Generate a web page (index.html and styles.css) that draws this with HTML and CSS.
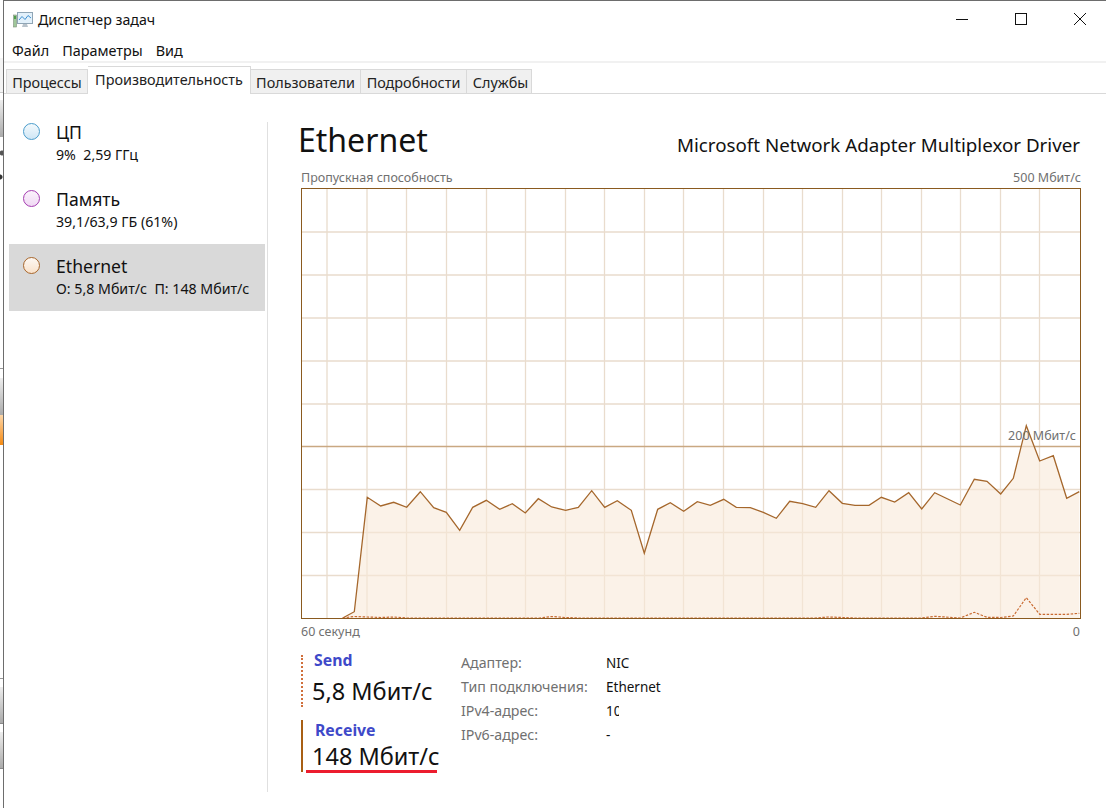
FILE: index.html
```html
<!DOCTYPE html>
<html lang="ru">
<head>
    <meta charset="UTF-8">
    <meta name="viewport" content="width=device-width, initial-scale=1.0">
    <title>Диспетчер задач</title>
    <link rel="stylesheet" href="styles.css">
</head>
<body>
    <div class="backdrop">
        <div class="strip strip-light"></div>
        <div class="strip strip-gray strip-first"></div>
        <div class="strip strip-gap"></div>
        <div class="strip strip-gray strip-tall"></div>
        <div class="strip strip-orange"></div>
        <div class="strip strip-gap2"></div>
        <div class="strip strip-gray strip-low"></div>
        <div class="strip strip-gray strip-low"></div>
    </div>

    <div class="window">
        <div class="titlebar">
            <svg class="app-icon" width="20" height="18" viewBox="0 0 20 18">
                <rect x="0.5" y="4" width="3" height="12" fill="#9fc79a" stroke="#7d8f7a" stroke-width="0.6"/>
                <rect x="1" y="5" width="2" height="3" fill="#4f9e4c"/>
                <rect x="4.5" y="1.5" width="15" height="11" fill="#e3f1fb" stroke="#8fa5b5"/>
                <path d="M6 9 L9 5.5 L12 8.5 L15 4.5 L18 7" fill="none" stroke="#3d8fd0" stroke-width="1"/>
                <path d="M10 13 H14 L15 16 H9 Z" fill="#b9c3cb"/>
            </svg>
            <span class="title-text">Диспетчер задач</span>
            <div class="win-buttons">
                <svg width="14" height="14" viewBox="0 0 14 14"><path d="M1 7.5 H13" stroke="#111" fill="none"/></svg>
                <svg width="14" height="14" viewBox="0 0 14 14"><rect x="1.5" y="1.5" width="11" height="11" stroke="#111" fill="none"/></svg>
                <svg width="14" height="14" viewBox="0 0 14 14"><path d="M1 1 L13 13 M13 1 L1 13" stroke="#111" fill="none"/></svg>
            </div>
        </div>

        <div class="menubar">
            <span>Файл</span>
            <span>Параметры</span>
            <span>Вид</span>
        </div>

        <div class="tabs">
            <div class="tab tab-first">Процессы</div>
            <div class="tab tab-active">Производительность</div>
            <div class="tab tab-users">Пользователи</div>
            <div class="tab tab-details">Подробности</div>
            <div class="tab tab-services">Службы</div>
        </div>

        <div class="content">
            <div class="sidebar">
                <div class="item">
                    <span class="dot dot-cpu"></span>
                    <div>
                        <div class="item-name">ЦП</div>
                        <div class="item-sub">9%&nbsp; 2,59 ГГц</div>
                    </div>
                </div>
                <div class="item">
                    <span class="dot dot-mem"></span>
                    <div>
                        <div class="item-name">Память</div>
                        <div class="item-sub">39,1/63,9 ГБ (61%)</div>
                    </div>
                </div>
                <div class="item item-selected">
                    <span class="dot dot-net"></span>
                    <div>
                        <div class="item-name">Ethernet</div>
                        <div class="item-sub">О: 5,8 Мбит/с&nbsp; П: 148 Мбит/с</div>
                    </div>
                </div>
            </div>

            <div class="main">
                <div class="heading">
                    <h1>Ethernet</h1>
                    <div class="driver">Microsoft Network Adapter Multiplexor Driver</div>
                </div>

                <div class="axis-row axis-top">
                    <span>Пропускная способность</span>
                    <span>500 Мбит/с</span>
                </div>

                <div class="chart">
                    <svg class="chart-svg" width="780" height="431" viewBox="301 188 780 431">
                        <path class="grid" d="M327 188V619 M367 188V619 M406.500 188V619 M446.500 188V619 M486.500 188V619 M525.500 188V619 M565.500 188V619 M604.500 188V619 M644.500 188V619 M683.500 188V619 M723.500 188V619 M763.500 188V619 M802.500 188V619 M842.500 188V619 M881.500 188V619 M921.500 188V619 M960.500 188V619 M1000.500 188V619 M1039.500 188V619"/>
                        <path class="grid" d="M301 232H1080 M301 275H1080 M301 318H1080 M301 361H1080 M301 404H1080 M301 489.500H1080 M301 532.500H1080 M301 575.500H1080"/>
                        <path class="limit" d="M301 446.500H1080"/>
                        <polygon class="area" points="342.700,618 354.300,611.700 367.300,497.300 380.700,506 393.700,502.300 406.700,507.300 420.300,491.700 433.700,507.700 446.300,512.300 459.700,530.300 472.700,507.300 486.300,500.300 499.700,509.300 512.300,503.700 525.300,513 538.300,498.700 551.700,507 565.700,510.300 578.300,507.300 591.700,490.700 604.700,507.300 617.300,500.700 631.300,510.300 644.300,553.300 657.700,509.300 670.300,502.700 683.700,511.300 697.300,501.700 710.300,505.300 723.700,499.300 736.300,507.300 750.300,507.700 763.300,512.300 776.300,518.300 789.700,501.300 802.700,503.700 815.700,507.300 829,490.700 842.300,503.300 855,505.300 869,505.300 881.300,497.300 894.700,502 908.700,492.700 921.700,509 934.700,492.700 960.300,505 974.300,479.300 987,481.300 1000.700,494 1013.300,478.300 1026.300,425.700 1039.700,461 1053.300,455.700 1066.700,498.300 1079.300,491.700 1079.300,618"/>
                        <polyline class="receive" points="342.700,618 354.300,611.700 367.300,497.300 380.700,506 393.700,502.300 406.700,507.300 420.300,491.700 433.700,507.700 446.300,512.300 459.700,530.300 472.700,507.300 486.300,500.300 499.700,509.300 512.300,503.700 525.300,513 538.300,498.700 551.700,507 565.700,510.300 578.300,507.300 591.700,490.700 604.700,507.300 617.300,500.700 631.300,510.300 644.300,553.300 657.700,509.300 670.300,502.700 683.700,511.300 697.300,501.700 710.300,505.300 723.700,499.300 736.300,507.300 750.300,507.700 763.300,512.300 776.300,518.300 789.700,501.300 802.700,503.700 815.700,507.300 829,490.700 842.300,503.300 855,505.300 869,505.300 881.300,497.300 894.700,502 908.700,492.700 921.700,509 934.700,492.700 960.300,505 974.300,479.300 987,481.300 1000.700,494 1013.300,478.300 1026.300,425.700 1039.700,461 1053.300,455.700 1066.700,498.300 1079.300,491.700"/>
                        <polyline class="send" points="342.700,618 354,616.500 367,617 381,617.500 394,617 407,618 540,618 552,616.500 565,617.500 578,618 815,618 829,617 842,617.500 855,618 921.700,618 934.700,616.300 960.300,618 974.300,612.300 987,617.300 1000.700,617.500 1013.300,616 1026.300,597.700 1039.700,614.300 1066.700,614.300 1079.300,613.300"/>
                    </svg>
                    <span class="limit-label">200 Мбит/с</span>
                </div>

                <div class="axis-row axis-bottom">
                    <span>60 секунд</span>
                    <span>0</span>
                </div>

                <div class="details">
                    <div class="rates">
                        <div class="rate rate-send">
                            <div class="rate-label">Send</div>
                            <div class="rate-value">5,8 Мбит/с</div>
                        </div>
                        <div class="rate rate-receive">
                            <div class="rate-label">Receive</div>
                            <div class="rate-value">148 Мбит/с</div>
                            <span class="underline"></span>
                        </div>
                    </div>
                    <div class="props">
                        <span class="prop-name">Адаптер:</span><span class="prop-value">NIC</span>
                        <span class="prop-name">Тип подключения:</span><span class="prop-value">Ethernet</span>
                        <span class="prop-name">IPv4-адрес:</span><span class="prop-value prop-clip">10.0.0.2</span>
                        <span class="prop-name">IPv6-адрес:</span><span class="prop-value">-</span>
                    </div>
                </div>
            </div>
        </div>
    </div>
</body>
</html>
```

FILE: styles.css
```css
html, body {
    height: 100%;
}

body {
    margin: 0;
    display: flex;
    font-family: 'Noto Sans', 'Open Sans', sans-serif;
    background: white;
    color: #111;
    overflow: hidden;
}

/* windows behind the task manager */
.backdrop {
    width: 3px;
    flex: none;
    background: #fff;
}

.strip {
    height: 36px;
    background: linear-gradient(#eee, #aaa);
    border-bottom: 1px solid #888;
}

.strip-light {
    height: 92px;
    background: linear-gradient(#fff 58px, #f4f4f4 58px);
    border-bottom: 1px solid #ccc;
}

.strip-first {
    margin-top: 7px;
    border-bottom: none;
    height: 37px;
}

.strip-gap {
    height: 231px;
    background:
        radial-gradient(circle at 2px 16px, #555 2px, transparent 3px),
        radial-gradient(circle at 0 40px, #333 2px, transparent 3px),
        #fff;
    border-bottom: 1px solid #999;
}

.strip-tall {
    height: 37px;
    margin-top: 9px;
    border-bottom: none;
}

.strip-orange {
    height: 30px;
    background: linear-gradient(#fdd6a8, #f58a12);
    border-bottom: none;
}

.strip-gap2 {
    height: 233px;
    background: #fff;
    border-bottom: 1px solid #999;
}

.strip-low {
    margin-top: 8px;
}

.window {
    flex: 1;
    min-width: 0;
    display: flex;
    flex-direction: column;
    background: white;
    border-left: 1px solid #6d6d6d;
    border-top: 1px solid #6d6d6d;
}

.titlebar {
    height: 37px;
    display: flex;
    align-items: center;
    padding-left: 9px;
    flex: none;
}

.app-icon {
    margin-right: 5px;
    margin-top: 1px;
}

.title-text {
    font-size: 14.200px;
}

.win-buttons {
    margin-left: auto;
    display: flex;
    gap: 45px;
    padding-right: 19px;
    margin-top: -1px;
}

.menubar {
    height: 21px;
    padding-top: 2px;
    display: flex;
    align-items: center;
    gap: 13px;
    padding-left: 8px;
    font-size: 14.400px;
    flex: none;
    border-bottom: 2px solid #f1f1f1;
}

.tabs {
    height: 30px;
    display: flex;
    align-items: flex-end;
    padding-left: 2px;
    border-bottom: 1px solid #d9d9d9;
    flex: none;
}

.tab {
    height: 23px;
    line-height: 25px;
    font-size: 14.400px;
    text-align: center;
    background: #f0f0f0;
    color: #222;
    border: 1px solid #d9d9d9;
    border-bottom: none;
    border-left: none;
    box-sizing: content-box;
    white-space: nowrap;
}

.tab-first {
    width: 80px;
    border-left: 1px solid #d9d9d9;
}

.tab-active {
    width: 162px;
    height: 27px;
    line-height: 26px;
    background: white;
    margin-bottom: -1px;
}

.tab-users {
    width: 109px;
}

.tab-details {
    width: 105px;
}

.tab-services {
    width: 64px;
    text-indent: 3px;
}

.content {
    flex: 1;
    display: flex;
    min-height: 0;
}

.sidebar {
    width: 263px;
    margin-top: 28px;
    margin-bottom: 16px;
    border-right: 1px solid #e0e0e0;
    flex: none;
}

.item {
    width: 256px;
    height: 67px;
    margin-left: 5px;
    box-sizing: border-box;
    display: flex;
    align-items: flex-start;
}

.sidebar .item:first-child {
    margin-top: -12px;
}

.item-selected {
    background: #d9d9d9;
}

.dot {
    width: 15px;
    height: 15px;
    border: 1.800px solid;
    border-radius: 50%;
    margin: 13px 16px 0 14px;
    flex: none;
}

.dot-cpu {
    border-color: #4a9ccb;
    background: linear-gradient(#f4fafd, #cfe6f5);
}

.dot-mem {
    border-color: #a43cb0;
    background: linear-gradient(#fbf3fc, #f0d8f4);
}

.dot-net {
    border-color: #a8672c;
    background: linear-gradient(#fdf8f3, #f9e2cb);
}

.item-name {
    font-size: 17.600px;
    line-height: 22px;
    margin-top: 11px;
}

.item-sub {
    font-size: 14.200px;
    line-height: 20px;
    margin-top: 2px;
    white-space: nowrap;
}

.main {
    width: 780px;
    margin-left: 33px;
    flex: none;
}

.heading {
    height: 60px;
    display: flex;
    justify-content: space-between;
    align-items: flex-end;
    margin-left: -3px;
    margin-top: 16px;
}

h1 {
    margin: 0;
    font-size: 32px;
    font-weight: 400;
    line-height: 60px;
    height: 60px;
}

.driver {
    font-size: 18.750px;
    line-height: 24px;
    padding-bottom: 13px;
    margin-right: 1px;
}

.axis-row {
    display: flex;
    justify-content: space-between;
    font-size: 12.500px;
    color: #707070;
    width: 780px;
    height: 18px;
    line-height: 18px;
}

.axis-top {
    margin-top: -1px;
    margin-bottom: 1px;
}

.axis-bottom {
    margin-top: 4px;
}

.axis-bottom span:last-child {
    padding-right: 1px;
}

.chart {
    position: relative;
    width: 780px;
    height: 431px;
}

.chart-svg {
    display: block;
    position: absolute;
    left: 0;
    top: 0;
}

.chart::after {
    content: "";
    position: absolute;
    inset: 0;
    border: 1.500px solid #8a5a1f;
}

.grid {
    stroke: #e9dccd;
    stroke-width: 1.300;
    fill: none;
}

.limit {
    stroke: #c9a882;
    stroke-width: 1.300;
    fill: none;
}

.area {
    fill: #f9e9d8;
    fill-opacity: 0.6;
}

.receive {
    fill: none;
    stroke: #a5672c;
    stroke-width: 1.300;
}

.send {
    fill: none;
    stroke: #c96a30;
    stroke-width: 1.200;
    stroke-dasharray: 2.500 1.500;
}

.limit-label {
    position: absolute;
    right: 5px;
    top: 239px;
    font-size: 12.500px;
    line-height: 18px;
    color: #707070;
}

.details {
    display: flex;
    margin-top: 9px;
}

.rates {
    width: 160px;
    flex: none;
    margin-top: 5px;
}

.rate {
    display: flow-root;
    position: relative;
    width: 140px;
    height: 52px;
    padding-left: 11px;
    box-sizing: border-box;
}

.rate-send {
    border-left: 2px dotted #d0703c;
}

.rate-receive {
    border-left: 2px solid #a85f14;
    margin-top: 13px;
}

.rate-label {
    font-size: 15.800px;
    font-weight: 700;
    color: #3e49c9;
    line-height: 20px;
    margin-top: -5px;
}

.rate-value {
    font-size: 23.500px;
    line-height: 30px;
    white-space: nowrap;
    margin-left: -2px;
    margin-top: 6px;
}

.rate-receive .rate-label {
    margin-top: 0;
    margin-left: 1px;
}

.rate-receive .rate-value {
    margin-top: 1px;
    margin-left: -2px;
}

.underline {
    position: absolute;
    left: 3px;
    bottom: -1px;
    width: 131px;
    height: 3px;
    background: #ec1c2e;
}

.props {
    display: grid;
    grid-template-columns: 145px 100px;
    grid-auto-rows: 24px;
    align-items: center;
    font-size: 13.500px;
    line-height: 24px;
    margin-top: 1px;
}

.prop-name {
    color: #707070;
    white-space: nowrap;
    font-size: 14.200px;
}

.prop-clip {
    width: 13px;
    overflow: hidden;
    white-space: nowrap;
}
```
